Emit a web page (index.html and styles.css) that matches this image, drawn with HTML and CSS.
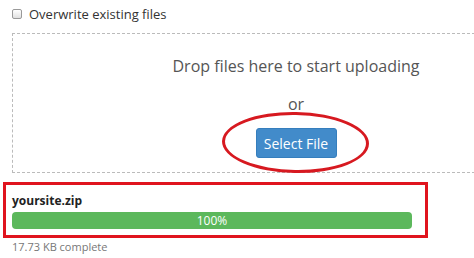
FILE: index.html
```html
<!DOCTYPE html>
<html>
<head>
<meta charset="utf-8">
<link rel="stylesheet" href="styles.css">
</head>
<body>
<div class="page">
  <label class="option">
    <span class="check"></span>
    <span class="option-text">Overwrite existing files</span>
  </label>
  <div class="dropzone">
    <div class="drop-text">Drop files here to start uploading</div>
    <div class="or">or</div>
    <div class="btn-wrap">
      <button class="btn">Select File</button>
      <span class="ring"></span>
    </div>
  </div>
  <div class="upload">
    <div class="upload-box">
      <div class="filename">yoursite.zip</div>
      <div class="progress"><div class="bar" style="width:100%">100%</div></div>
    </div>
    <div class="status">17.73 KB complete</div>
  </div>
</div>
</body>
</html>
```
FILE: styles.css
```css
html, body {
  margin: 0;
  padding: 0;
  overflow: hidden;
  background: #fff;
}
body {
  font-family: "Open Sans", "Liberation Sans", sans-serif;
  color: #333;
}
.page {
  width: 474px;
  height: 258px;
  overflow: hidden;
}
.option {
  display: flex;
  align-items: center;
  gap: 7px;
  padding: 4px 0 0 12px;
  height: 20px;
  font-size: 13px;
}
.check {
  width: 8px;
  height: 8px;
  border: 1px solid #999;
  border-radius: 2px;
  background: linear-gradient(#fff, #e0e0e0);
}
.option-text {
  color: #333;
}
.dropzone {
  margin: 9px 0 0 12px;
  width: 566px;
  height: 138px;
  border: 1px dashed #bbb;
  display: flex;
  flex-direction: column;
  align-items: center;
  color: #555;
}
.drop-text {
  font-size: 16px;
  line-height: 24px;
  margin-top: 20px;
}
.or {
  font-size: 16px;
  line-height: 24px;
  margin-top: 14px;
}
.btn-wrap {
  position: relative;
  margin-top: 12px;
}
.btn {
  display: block;
  width: 81px;
  height: 30px;
  padding: 0;
  border: 1px solid #357ebd;
  border-radius: 3px;
  background: #428bca;
  color: #fff;
  font-family: "Open Sans", "Liberation Sans", sans-serif;
  font-size: 14px;
}
.ring {
  position: absolute;
  left: -34px;
  top: -16px;
  width: 147px;
  height: 61px;
  border: 3px solid #d71920;
  border-radius: 50%;
  box-sizing: border-box;
  transform: rotate(1deg);
}
.upload {
  margin-top: 9px;
  padding-left: 3px;
}
.upload-box {
  height: 50px;
  border: 3px solid #e0141e;
  padding: 0 0 0 6px;
  box-sizing: content-box;
  width: 413px;
}
.filename {
  font-weight: bold;
  font-size: 12px;
  line-height: 18px;
  margin-top: 7px;
  color: #222;
}
.progress {
  margin-top: 2px;
  width: 400px;
  height: 17px;
  border-radius: 4px;
  background: #f5f5f5;
  overflow: hidden;
}
.bar {
  height: 17px;
  background: #5cb85c;
  color: #fff;
  font-size: 12px;
  line-height: 17px;
  text-align: center;
}
.status {
  padding-left: 9px;
  margin-top: 1px;
  font-size: 11px;
  line-height: 15px;
  color: #777;
}
```
